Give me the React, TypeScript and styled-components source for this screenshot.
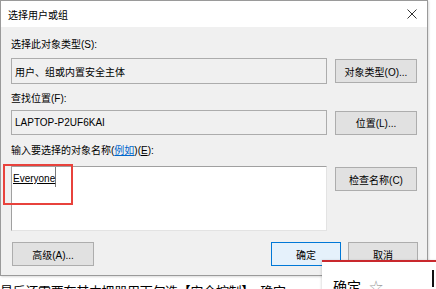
import styled, { createGlobalStyle } from 'styled-components';

const GlobalStyle = createGlobalStyle`
  html, body {
    margin: 0;
    padding: 0;
    background: #ffffff;
    overflow: hidden;
  }
  body {
    font-family: "Liberation Sans", "Noto Sans CJK SC", sans-serif;
    font-size: 10px;
    color: #000;
  }
`;

const Page = styled.div`
  position: relative;
  width: 436px;
  height: 289px;
  overflow: hidden;
`;

const Dialog = styled.div`
  width: 426px;
  border: 1px solid #9a9a9a;
  background: #f0f0f0;
  box-shadow: 1px 1px 2px rgba(0, 0, 0, 0.15);
`;

const TitleBar = styled.div`
  height: 26px;
  background: #ffffff;
  display: flex;
  align-items: center;
  justify-content: space-between;
  padding: 0 10px 0 7px;
  font-size: 10px;
`;

const Body = styled.div`
  padding: 11px 9px 9px 10px;
  display: flex;
  flex-direction: column;
`;

const Label = styled.div<{ $top: number }>`
  height: 14px;
  line-height: 14px;
  margin-top: ${(p) => p.$top}px;
  white-space: nowrap;
`;

const Row = styled.div<{ $top: number; $align?: string }>`
  display: grid;
  grid-template-columns: 316px 82px;
  column-gap: 8px;
  align-items: ${(p) => p.$align || 'center'};
  margin-top: ${(p) => p.$top}px;
`;

const ReadBox = styled.div<{ $h: number }>`
  height: ${(p) => p.$h - 2}px;
  border: 1px solid #acacac;
  background: #f0f0f0;
  display: flex;
  align-items: center;
  padding-left: 3px;
  white-space: nowrap;
`;

const InputArea = styled.div`
  position: relative;
  height: 63px;
  background: #ffffff;
  border-top: 1px solid #a0a0a0;
  border-left: 1px solid #a0a0a0;
  border-right: 1px solid #e3e3e3;
  border-bottom: 1px solid #e3e3e3;
  padding-left: 1px;
`;

const Resolved = styled.span`
  display: inline-block;
  height: 16px;
  padding-top: 4px;
  line-height: 16px;
  text-decoration: underline;
  border-right: 1px solid #7a7a7a;
`;

const Highlight = styled.div`
  position: absolute;
  left: -9px;
  top: -3px;
  width: 66px;
  height: 37px;
  border: 2px solid #e8423c;
`;

const Button = styled.div<{ $primary?: boolean; $w?: number }>`
  width: ${(p) => (p.$w || 82) - 2}px;
  height: 22px;
  border: 1px solid ${(p) => (p.$primary ? '#0078d7' : '#adadad')};
  background: ${(p) => (p.$primary ? '#e5f1fb' : '#e1e1e1')};
  display: flex;
  align-items: center;
  justify-content: center;
  white-space: nowrap;
`;

const Footer = styled.div`
  display: flex;
  align-items: center;
  margin-top: 11px;
  padding-left: 1px;
`;

const Spacer = styled.div`
  flex: 1;
`;

const FooterRight = styled.div`
  display: flex;
  gap: 7px;
`;

const Link = styled.span`
  color: #0066cc;
  text-decoration: underline;
`;

const Under = styled.span`
  text-decoration: underline;
`;

const Caption = styled.div`
  margin-top: 6px;
  font-family: "Noto Sans CJK SC", sans-serif;
  font-size: 13px;
  line-height: 18px;
  white-space: nowrap;
  letter-spacing: -0.3px;
`;

const Popup = styled.div`
  position: absolute;
  left: 322px;
  top: 260px;
  width: 120px;
  height: 40px;
  background: #ffffff;
  border-top: 2px solid #c9282d;
  box-shadow: -1px 0 2px rgba(0, 0, 0, 0.12);
  display: flex;
  align-items: flex-start;
  padding: 15px 0 0 11px;
  box-sizing: border-box;
  font-family: "Noto Sans CJK SC", sans-serif;
  font-size: 14px;
  line-height: 18px;
  gap: 8px;
`;

const Star = styled.span`
  color: #9a9a9a;
  font-size: 14px;
`;

const Cursor = styled.div`
  position: absolute;
  left: 110px;
  top: 8px;
  width: 2px;
  height: 17px;
  background: #111;
`;

function CloseIcon() {
  return (
    <svg width="10" height="10" viewBox="0 0 10 10">
      <path d="M0.5 0.5 L9.5 9.5 M9.5 0.5 L0.5 9.5" stroke="#333" strokeWidth="1" />
    </svg>
  );
}

export default function App() {
  return (
    <>
      <GlobalStyle />
      <Page>
        <Dialog>
          <TitleBar>
            <span>选择用户或组</span>
            <CloseIcon />
          </TitleBar>
          <Body>
            <Label $top={0}>选择此对象类型(S):</Label>
            <Row $top={6}>
              <ReadBox $h={26}>用户、组或内置安全主体</ReadBox>
              <Button>对象类型(O)...</Button>
            </Row>

            <Label $top={8}>查找位置(F):</Label>
            <Row $top={4}>
              <ReadBox $h={25}>LAPTOP-P2UF6KAI</ReadBox>
              <Button>位置(L)...</Button>
            </Row>

            <Label $top={9}>
              输入要选择的对象名称(<Link>例如</Link>)(<Under>E</Under>):
            </Label>
            <Row $top={8} $align="start">
              <InputArea>
                <Resolved>Everyone</Resolved>
                <Highlight />
              </InputArea>
              <Button style={{ marginTop: 1 }}>检查名称(C)</Button>
            </Row>

            <Footer>
              <Button>高级(A)...</Button>
              <Spacer />
              <FooterRight>
                <Button $primary $w={70}>确定</Button>
                <Button $w={70}>取消</Button>
              </FooterRight>
            </Footer>
          </Body>
        </Dialog>
        <Caption>最后还需要在其中把器用下勾选【安全控制】，确定</Caption>
        <Popup>
          <span>确定</span>
          <Star>☆</Star>
          <Cursor />
        </Popup>
      </Page>
    </>
  );
}
